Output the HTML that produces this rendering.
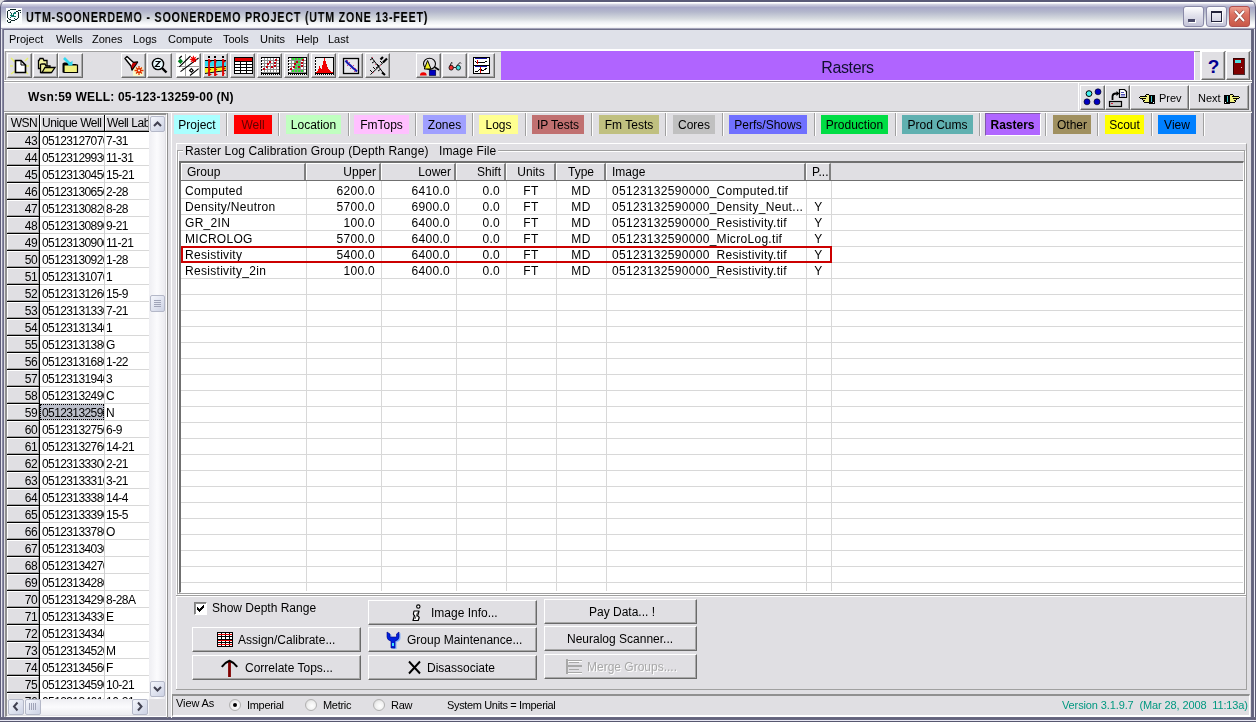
<!DOCTYPE html><html><head><meta charset="utf-8"><style>
*{margin:0;padding:0;box-sizing:border-box}
html,body{width:1256px;height:722px;overflow:hidden}
body{position:relative;background:#E0DFE3;font-family:"Liberation Sans",sans-serif;font-size:12px;color:#000}
.t{position:absolute;white-space:nowrap;line-height:14px;will-change:transform}
.btn{position:absolute;background:#E0DFE3;border-top:1px solid #fff;border-left:1px solid #fff;border-right:1px solid #6a6a6a;border-bottom:1px solid #6a6a6a;box-shadow:inset -1px -1px 0 #a8a8a8}
.rh{position:absolute;background:#E0DFE3;border-top:1px solid #fff;border-left:1px solid #fff;border-right:1px solid #a0a0a0;border-bottom:1px solid #a0a0a0}
</style></head><body>
<div style="position:absolute;left:0px;top:0px;width:1256px;height:30px;background:linear-gradient(#5a5a78 0px,#5a5a78 1.5px,#ffffff 2px,#ffffff 3px,#d0d0e0 4.5px,#a8a8c8 7.5px,#b4b8cc 12px,#d8dce0 19px,#eef0f4 22px,#ffffff 26px,#f0f0f4 27.5px,#b8b8cc 28.3px,#6e6e88 29px,#6e6e88 30px);border-radius:7px 7px 0 0;border-left:1px solid #5a5a78;border-right:1px solid #5a5a78"></div>
<svg style="position:absolute;left:5px;top:7px" width="17" height="17" viewBox="0 0 17 17" shape-rendering="crispEdges"><rect x="1" y="1" width="16" height="16" fill="#fafdfd"/><g fill="#102828"><rect x="5" y="2" width="1" height="1"/><rect x="6" y="2" width="1" height="1"/><rect x="7" y="2" width="1" height="1"/><rect x="8" y="2" width="1" height="1"/><rect x="9" y="2" width="1" height="1"/><rect x="10" y="2" width="1" height="1"/><rect x="3" y="3" width="1" height="1"/><rect x="4" y="3" width="1" height="1"/><rect x="13" y="3" width="1" height="1"/><rect x="14" y="3" width="1" height="1"/><rect x="15" y="3" width="1" height="1"/><rect x="2" y="4" width="1" height="1"/><rect x="11" y="4" width="1" height="1"/><rect x="12" y="4" width="1" height="1"/><rect x="2" y="5" width="1" height="1"/><rect x="13" y="5" width="1" height="1"/><rect x="15" y="5" width="1" height="1"/><rect x="2" y="6" width="1" height="1"/><rect x="13" y="6" width="1" height="1"/><rect x="2" y="7" width="1" height="1"/><rect x="13" y="7" width="1" height="1"/><rect x="2" y="8" width="1" height="1"/><rect x="13" y="8" width="1" height="1"/><rect x="2" y="9" width="1" height="1"/><rect x="13" y="9" width="1" height="1"/><rect x="2" y="10" width="1" height="1"/><rect x="13" y="10" width="1" height="1"/><rect x="3" y="11" width="1" height="1"/><rect x="12" y="11" width="1" height="1"/><rect x="4" y="12" width="1" height="1"/><rect x="11" y="12" width="1" height="1"/><rect x="10" y="12" width="1" height="1"/><rect x="2" y="13" width="1" height="1"/><rect x="6" y="13" width="1" height="1"/><rect x="7" y="13" width="1" height="1"/><rect x="8" y="13" width="1" height="1"/><rect x="9" y="13" width="1" height="1"/><rect x="5" y="12" width="1" height="1"/><rect x="2" y="14" width="1" height="1"/><rect x="3" y="15" width="1" height="1"/><rect x="4" y="15" width="1" height="1"/><rect x="5" y="15" width="1" height="1"/><rect x="5" y="14" width="1" height="1"/></g><g fill="#108070"><rect x="9" y="5" width="1" height="1"/><rect x="10" y="5" width="1" height="1"/><rect x="8" y="6" width="1" height="1"/><rect x="9" y="6" width="1" height="1"/><rect x="10" y="6" width="1" height="1"/><rect x="6" y="7" width="1" height="1"/><rect x="8" y="7" width="1" height="1"/><rect x="5" y="8" width="1" height="1"/><rect x="6" y="8" width="1" height="1"/><rect x="7" y="8" width="1" height="1"/><rect x="6" y="9" width="1" height="1"/><rect x="7" y="9" width="1" height="1"/><rect x="8" y="9" width="1" height="1"/><rect x="9" y="9" width="1" height="1"/><rect x="10" y="9" width="1" height="1"/></g><g fill="#204040"><rect x="5" y="5" width="1" height="1"/><rect x="6" y="6" width="1" height="1"/><rect x="8" y="8" width="1" height="1"/><rect x="5" y="10" width="1" height="1"/><rect x="9" y="11" width="1" height="1"/></g></svg>
<div style="position:absolute;left:1183px;top:6px;width:21px;height:21px;border:1px solid #8a8aa8;border-radius:3px;background:linear-gradient(#ffffff,#e4e4ee 40%,#c4c4d8)"></div><div style="position:absolute;left:1188px;top:19px;width:7px;height:3px;background:#4a4a68;box-shadow:1px 1px 0 #fff"></div><div style="position:absolute;left:1206px;top:6px;width:21px;height:21px;border:1px solid #8a8aa8;border-radius:3px;background:linear-gradient(#ffffff,#e4e4ee 40%,#c4c4d8)"></div><div style="position:absolute;left:1211px;top:11px;width:11px;height:11px;border:1px solid #202038;border-top-width:2px;box-shadow:1px 1px 0 #fff"></div><div style="position:absolute;left:1229px;top:6px;width:21px;height:21px;border:1px solid #b05050;border-radius:3px;background:linear-gradient(#eca090,#dc7060 40%,#c85848)"></div><svg style="position:absolute;left:1229px;top:6px" width="21" height="21" viewBox="0 0 21 21"><path d="M6 5 L15 15 M15 5 L6 15" stroke="#603030" stroke-width="3.4" opacity="0.55"/><path d="M6 5 L15 15 M15 5 L6 15" stroke="#fff" stroke-width="2"/></svg>
<div style="position:absolute;left:0px;top:29px;width:4px;height:693px;background:linear-gradient(90deg,#5e5c78 0,#5e5c78 1px,#e4e4ee 1px,#e4e4ee 2px,#8a8aa4 2px,#8a8aa4 3px,#6e6e88 3px,#6e6e88 4px)"></div>
<div style="position:absolute;left:1251px;top:29px;width:5px;height:693px;background:linear-gradient(90deg,#6c6c84 0,#5e5e78 2px,#74748c 3px,#e8e8f4 3px,#e8e8f4 4px,#585870 4px)"></div>
<div style="position:absolute;left:0px;top:717px;width:1256px;height:5px;background:linear-gradient(#6c6c84 0,#5e5e78 2px,#74748c 3px,#e8e8f4 3px,#e8e8f4 4px,#585870 4px)"></div>
<div class="t" style="left:26px;top:9px;font-weight:bold;font-size:14px;letter-spacing:1.0px;line-height:17px;color:#000;transform:scaleX(0.769);transform-origin:0 0">UTM-SOONERDEMO - SOONERDEMO PROJECT (UTM ZONE 13-FEET)</div>
<div style="position:absolute;left:4px;top:30px;width:1247px;height:19px;background:#DFE1E9"></div>
<div class="t" style="left:9px;top:32px;font-size:11px;line-height:14px">Project</div>
<div class="t" style="left:56px;top:32px;font-size:11px;line-height:14px">Wells</div>
<div class="t" style="left:92px;top:32px;font-size:11px;line-height:14px">Zones</div>
<div class="t" style="left:133px;top:32px;font-size:11px;line-height:14px">Logs</div>
<div class="t" style="left:168px;top:32px;font-size:11px;line-height:14px">Compute</div>
<div class="t" style="left:223px;top:32px;font-size:11px;line-height:14px">Tools</div>
<div class="t" style="left:260px;top:32px;font-size:11px;line-height:14px">Units</div>
<div class="t" style="left:296px;top:32px;font-size:11px;line-height:14px">Help</div>
<div class="t" style="left:328px;top:32px;font-size:11px;line-height:14px">Last</div>
<div style="position:absolute;left:4px;top:49px;width:1247px;height:2px;background:#fff"></div>
<div style="position:absolute;left:5px;top:51px;width:1247px;height:1px;background:#a0a0a0"></div>
<div style="position:absolute;left:5px;top:51px;width:1px;height:29px;background:#a0a0a0"></div>
<div style="position:absolute;left:4px;top:80px;width:1248px;height:1px;background:#fff"></div>
<div style="position:absolute;left:4px;top:81px;width:1248px;height:1px;background:#a0a0a0"></div>
<div style="position:absolute;left:4px;top:82px;width:1248px;height:1px;background:#fff"></div>
<div class="btn" style="left:7px;top:53px;width:25px;height:25px;"></div>
<div class="btn" style="left:33px;top:53px;width:25px;height:25px;"></div>
<div class="btn" style="left:58px;top:53px;width:25px;height:25px;"></div>
<div class="btn" style="left:121px;top:53px;width:25px;height:25px;"></div>
<div class="btn" style="left:147px;top:53px;width:25px;height:25px;"></div>
<div class="btn" style="left:176px;top:53px;width:25px;height:25px;"></div>
<div class="btn" style="left:203px;top:53px;width:25px;height:25px;"></div>
<div class="btn" style="left:230px;top:53px;width:25px;height:25px;"></div>
<div class="btn" style="left:257px;top:53px;width:25px;height:25px;"></div>
<div class="btn" style="left:284px;top:53px;width:25px;height:25px;"></div>
<div class="btn" style="left:311px;top:53px;width:25px;height:25px;"></div>
<div class="btn" style="left:338px;top:53px;width:25px;height:25px;"></div>
<div class="btn" style="left:365px;top:53px;width:25px;height:25px;"></div>
<div class="btn" style="left:416px;top:53px;width:25px;height:25px;"></div>
<div class="btn" style="left:442px;top:53px;width:25px;height:25px;"></div>
<div class="btn" style="left:468px;top:53px;width:27px;height:25px;"></div>
<svg style="position:absolute;left:7px;top:53px" width="25" height="25" viewBox="0 0 25 25"><g stroke="#e8f070" stroke-width="1.5"><path d="M4 5 L8 9 M21 5 L18 8 M4 21 L8 18 M21 21 L18 18 M3 13 H6 M19 13 H22"/></g><path d="M8.5 7.5 H14 L18.5 12 V19.5 H8.5 Z" fill="#fff" stroke="#000" stroke-width="1.6"/><path d="M14 7.5 V12 H18.5" fill="none" stroke="#000" stroke-width="1"/></svg><svg style="position:absolute;left:33px;top:53px" width="25" height="25" viewBox="0 0 25 25"><path d="M5.5 7.5 V15.5 H14 V7.5 H11 L10 5.5 H7 L6 7.5 Z" fill="#f0f0a0" stroke="#000" stroke-width="1.3"/><path d="M7.5 11.5 V19.5 H17 V13 H13 L12 11 H9 Z" fill="#f0f0a0" stroke="#000" stroke-width="1.3"/><path d="M9 19.5 L12 14.5 H22 L18.5 19.5 Z" fill="#e8e880" stroke="#000" stroke-width="1.3"/></svg><svg style="position:absolute;left:58px;top:53px" width="25" height="25" viewBox="0 0 25 25"><path d="M4.5 10.5 V19.5 H18.5 V11 H14 L13 9.5 H6 Z" fill="#000"/><path d="M6 12 H19.5 V19.5 H6 Z" fill="#f0f080" stroke="#000" stroke-width="1.2"/><path d="M6 5 L12 11" stroke="#30d8f0" stroke-width="2.6"/><path d="M9.5 12.5 H14.5 V7.5 Z" fill="#30d8f0"/></svg><svg style="position:absolute;left:121px;top:53px" width="25" height="25" viewBox="0 0 25 25"><path d="M12 14 L22 14 L22 23 L12 23 Z" fill="#fafac8"/><path d="M4 5.5 L6 3.5 L12.5 9.5 L16.5 9 L11 17 L10 13 Z" fill="#fff" stroke="#000" stroke-width="1.4" stroke-linejoin="round"/><path d="M11.5 10 L16 9.5 L11 16 L10.5 12.5 Z" fill="#c00000"/><g stroke="#e03000" stroke-width="1.3"><path d="M18 13 V22 M13.5 17.5 H22.5 M15 14.5 L21 20.5 M21 14.5 L15 20.5"/></g><circle cx="18" cy="17.5" r="2.4" fill="#e03000"/><circle cx="18" cy="17.5" r="1" fill="#fff"/></svg><svg style="position:absolute;left:147px;top:53px" width="25" height="25" viewBox="0 0 25 25"><circle cx="11" cy="11" r="5.6" fill="#e8f8fc" stroke="#000" stroke-width="1.4"/><path d="M15 15 L19.5 19.5" stroke="#000" stroke-width="2.4"/><path d="M8.5 8.5 H13 L8.5 13.5 H13" fill="none" stroke="#000" stroke-width="1.2"/></svg><svg style="position:absolute;left:176px;top:53px" width="25" height="25" viewBox="0 0 25 25"><rect x="1" y="1" width="22" height="22" fill="#fff"/><g fill="#a0a0a0"><rect x="9" y="1" width="1" height="22"/><rect x="1" y="13" width="22" height="1"/><rect x="6" y="15" width="2" height="1"/></g><g stroke="#000" stroke-width="1.1" fill="none"><path d="M3 5.5 L5.8 3 M3.3 13.8 L14.5 3 M4.5 18.6 L22.6 5 M14 22.5 L22.6 15.6"/></g><path d="M4.4 5.6 L7 8.3 L4.4 11 L1.8 8.3 Z" fill="#008020"/><circle cx="17.4" cy="6.4" r="2.2" fill="#f00000"/><g stroke="#f00000" stroke-width="1"><path d="M17.4 2.8 V10 M13.8 6.4 H21 M14.8 3.8 L20 9 M20 3.8 L14.8 9"/></g><path d="M15.4 14.8 L18 17.4 L15.4 20 L12.8 17.4 Z" fill="#000"/><rect x="14.7" y="16.7" width="1.4" height="1.4" fill="#fff"/></svg><svg style="position:absolute;left:203px;top:53px" width="25" height="25" viewBox="0 0 25 25"><rect x="2" y="8" width="21" height="5.5" fill="#30d8f0"/><path d="M2 14.5 H14 L23 13.5 V17.5 L12 18.5 L2 20 Z" fill="#f0f020"/><g fill="#000"><rect x="5" y="3" width="2" height="2"/><rect x="11" y="3" width="2" height="2"/><rect x="19" y="3" width="2" height="2"/></g><g stroke="#000" stroke-width="1" fill="none"><path d="M2 7.5 H23 M2 14.5 H12 L23 13.5 M2 20.5 L12 19 L23 17.5"/></g><g stroke="#e00000" stroke-width="1.8"><path d="M6 6 V23 M12 6 V23 M20 6 V23"/></g><g fill="#e00000"><path d="M6 7 L9 8.5 L6 10 Z M12 7 L14 9 L12 10 Z M20 7 L23 8.5 L20 10 Z M6 15 L8.5 16.5 L6 18 Z M12 15 L14.5 16.5 L12 18 Z M20 14 L23 15.5 L20 17 Z M6 20 L9 21.5 L6 23 Z M12 20 L15 21.5 L12 23 Z M20 19 L22 20.5 L20 22 Z"/></g></svg><svg style="position:absolute;left:230px;top:53px" width="25" height="25" viewBox="0 0 25 25" shape-rendering="crispEdges"><rect x="4" y="4" width="19" height="17" fill="#000"/><rect x="5" y="5" width="17" height="3" fill="#e00000"/><g fill="#fff"><rect x="5" y="9" width="5" height="2"/><rect x="11" y="9" width="5" height="2"/><rect x="17" y="9" width="5" height="2"/><rect x="5" y="12" width="5" height="2"/><rect x="11" y="12" width="5" height="2"/><rect x="17" y="12" width="5" height="2"/><rect x="5" y="15" width="5" height="2"/><rect x="11" y="15" width="5" height="2"/><rect x="17" y="15" width="5" height="2"/><rect x="5" y="18" width="5" height="2"/><rect x="11" y="18" width="5" height="2"/><rect x="17" y="18" width="5" height="2"/></g></svg><svg style="position:absolute;left:257px;top:53px" width="25" height="25" viewBox="0 0 25 25" shape-rendering="crispEdges"><rect x="4" y="4" width="19" height="18" fill="#000"/><rect x="5" y="5" width="17" height="15" fill="#fff"/><g fill="#fff"><rect x="4" y="6" width="1" height="1"/><rect x="4" y="9" width="1" height="1"/><rect x="4" y="12" width="1" height="1"/><rect x="4" y="15" width="1" height="1"/><rect x="4" y="18" width="1" height="1"/><rect x="5" y="21" width="1" height="1"/><rect x="7" y="21" width="1" height="1"/><rect x="9" y="21" width="1" height="1"/><rect x="11" y="21" width="1" height="1"/><rect x="13" y="21" width="1" height="1"/><rect x="15" y="21" width="1" height="1"/><rect x="17" y="21" width="1" height="1"/><rect x="19" y="21" width="1" height="1"/><rect x="21" y="21" width="1" height="1"/></g><g fill="#909090"><rect x="7" y="5" width="1" height="15"/><rect x="10" y="5" width="1" height="15"/><rect x="13" y="5" width="1" height="15"/><rect x="16" y="5" width="1" height="15"/><rect x="19" y="5" width="1" height="15"/><rect x="5" y="7" width="17" height="1"/><rect x="5" y="10" width="17" height="1"/><rect x="5" y="13" width="17" height="1"/><rect x="5" y="16" width="17" height="1"/><rect x="5" y="19" width="17" height="1"/></g><g fill="#c00010"><rect x="6" y="15" width="2" height="2"/><rect x="9" y="13" width="2" height="2"/><rect x="10" y="10" width="2" height="2"/><rect x="14" y="13" width="2" height="2"/><rect x="12" y="8" width="2" height="2"/><rect x="17" y="9" width="2" height="2"/><rect x="17" y="12" width="2" height="2"/><rect x="18" y="6" width="2" height="2"/></g></svg><svg style="position:absolute;left:284px;top:53px" width="25" height="25" viewBox="0 0 25 25" shape-rendering="crispEdges"><rect x="4" y="4" width="19" height="18" fill="#000"/><rect x="5" y="5" width="17" height="15" fill="#fff"/><g fill="#fff"><rect x="4" y="6" width="1" height="1"/><rect x="4" y="9" width="1" height="1"/><rect x="4" y="12" width="1" height="1"/><rect x="4" y="15" width="1" height="1"/><rect x="4" y="18" width="1" height="1"/><rect x="5" y="21" width="1" height="1"/><rect x="7" y="21" width="1" height="1"/><rect x="9" y="21" width="1" height="1"/><rect x="11" y="21" width="1" height="1"/><rect x="13" y="21" width="1" height="1"/><rect x="15" y="21" width="1" height="1"/><rect x="17" y="21" width="1" height="1"/><rect x="19" y="21" width="1" height="1"/><rect x="21" y="21" width="1" height="1"/></g><g fill="#30e030"><rect x="8" y="5" width="12" height="3"/><rect x="11" y="8" width="6" height="9"/><rect x="8" y="17" width="12" height="3"/></g><g fill="#909090"><rect x="7" y="5" width="1" height="15"/><rect x="10" y="5" width="1" height="15"/><rect x="13" y="5" width="1" height="15"/><rect x="16" y="5" width="1" height="15"/><rect x="19" y="5" width="1" height="15"/><rect x="5" y="7" width="17" height="1"/><rect x="5" y="10" width="17" height="1"/><rect x="5" y="13" width="17" height="1"/><rect x="5" y="16" width="17" height="1"/><rect x="5" y="19" width="17" height="1"/></g><g fill="#c00010"><rect x="6" y="15" width="2" height="2"/><rect x="9" y="13" width="2" height="2"/><rect x="10" y="10" width="2" height="2"/><rect x="14" y="13" width="2" height="2"/><rect x="12" y="8" width="2" height="2"/><rect x="17" y="9" width="2" height="2"/><rect x="17" y="12" width="2" height="2"/><rect x="18" y="6" width="2" height="2"/></g></svg><svg style="position:absolute;left:311px;top:53px" width="25" height="25" viewBox="0 0 25 25" shape-rendering="crispEdges"><rect x="4" y="4" width="19" height="18" fill="#000"/><rect x="5" y="5" width="17" height="15" fill="#f0f0f0"/><g fill="#fff"><rect x="4" y="6" width="1" height="1"/><rect x="4" y="9" width="1" height="1"/><rect x="4" y="12" width="1" height="1"/><rect x="4" y="15" width="1" height="1"/><rect x="4" y="18" width="1" height="1"/><rect x="5" y="21" width="1" height="1"/><rect x="7" y="21" width="1" height="1"/><rect x="9" y="21" width="1" height="1"/><rect x="11" y="21" width="1" height="1"/><rect x="13" y="21" width="1" height="1"/><rect x="15" y="21" width="1" height="1"/><rect x="17" y="21" width="1" height="1"/><rect x="19" y="21" width="1" height="1"/><rect x="21" y="21" width="1" height="1"/></g><g fill="#f00000"><rect x="5" y="19" width="1" height="1"/><rect x="6" y="18" width="1" height="2"/><rect x="7" y="16" width="1" height="4"/><rect x="8" y="13" width="1" height="7"/><rect x="9" y="15" width="1" height="5"/><rect x="10" y="16" width="1" height="4"/><rect x="11" y="12" width="1" height="8"/><rect x="12" y="8" width="1" height="12"/><rect x="13" y="5" width="1" height="15"/><rect x="14" y="8" width="1" height="12"/><rect x="15" y="11" width="1" height="9"/><rect x="16" y="14" width="1" height="6"/><rect x="17" y="16" width="1" height="4"/><rect x="18" y="17" width="1" height="3"/><rect x="19" y="18" width="1" height="2"/><rect x="20" y="19" width="1" height="1"/><rect x="21" y="19" width="1" height="1"/></g></svg><svg style="position:absolute;left:338px;top:53px" width="25" height="25" viewBox="0 0 25 25"><rect x="5.5" y="5.5" width="15" height="15" fill="#e8e8ec" stroke="#000" stroke-width="1.3"/><path d="M7.5 7.5 L10 10.5 L12.5 12.5 L15 15 L17.5 17 L19 18.5" fill="none" stroke="#1818b0" stroke-width="2.2"/><g fill="#e04080"><rect x="9" y="7" width="1" height="1"/><rect x="11" y="9" width="1" height="1"/><rect x="9" y="12" width="1" height="1"/><rect x="15" y="12" width="1" height="1"/><rect x="12" y="15" width="1" height="1"/><rect x="17" y="15" width="1" height="1"/><rect x="16" y="18" width="1" height="1"/></g></svg><svg style="position:absolute;left:365px;top:53px" width="25" height="25" viewBox="0 0 25 25"><g stroke="#000" stroke-width="1" fill="none"><path d="M6.5 4.5 L19.5 21.5 M5.5 21.5 L21.5 6.5"/><path d="M5 7 L8 5 M7 10 L10 8 M11 15 L14 13 M13 18 L16 16 M5 17 L7 19 M8 14 L10 16 M12 11 L14 13 M15 8 L17 10"/></g><g stroke="#000" stroke-width="2.2"><path d="M15.5 6.5 L18 4 M18 9.5 L22 5.5 M17 19.5 L20 22"/></g><g fill="#f06080"><rect x="7" y="4" width="1" height="1"/><rect x="10" y="11" width="1" height="1"/><rect x="15" y="12" width="1" height="1"/><rect x="8" y="19" width="1" height="1"/></g></svg><svg style="position:absolute;left:416px;top:53px" width="25" height="25" viewBox="0 0 25 25"><ellipse cx="13.5" cy="10.8" rx="6" ry="5.6" fill="none" stroke="#000" stroke-width="1.1"/><path d="M18.5 14 L23 17" stroke="#000" stroke-width="1.6"/><path d="M11.6 7.5 L15 16 H8.3 Z" fill="#f0f020" stroke="#000" stroke-width="1"/><path d="M3.9 22.6 A3.4 3.4 0 0 1 10.7 22.6 Z" fill="#f00000"/><rect x="13.2" y="17" width="6.6" height="5.6" fill="#0000c0" stroke="#000" stroke-width="0.5"/></svg><svg style="position:absolute;left:442px;top:53px" width="25" height="25" viewBox="0 0 25 25"><path d="M8 13 L9.5 9.5 L10.5 10 M15 12.5 L18 9.5 L19 10.5" fill="none" stroke="#000" stroke-width="0.9"/><path d="M11.3 14.5 H14.2" stroke="#000" stroke-width="0.8"/><ellipse cx="9.2" cy="14.7" rx="2.2" ry="2.4" fill="#f03030" stroke="#000" stroke-width="0.8"/><ellipse cx="16.3" cy="14.7" rx="2.2" ry="2.4" fill="#40e0e0" stroke="#000" stroke-width="0.8"/></svg><svg style="position:absolute;left:468px;top:53px" width="27" height="25" viewBox="0 0 27 25" shape-rendering="crispEdges"><rect x="5" y="4" width="17" height="17" fill="#000"/><rect x="6" y="5" width="15" height="7" fill="#fff"/><rect x="6" y="13" width="15" height="7" fill="#fff"/><rect x="7" y="5" width="12" height="1" fill="#1010a0"/><rect x="7" y="13" width="12" height="1" fill="#1010a0"/><g stroke="#000" stroke-width="1" fill="none"><path d="M7 8 L9 10 L12 9 L15 10 L19 8 M7 18 L10 18 L12 16 L15 18 L19 15"/></g><g stroke="#e00000" stroke-width="1"><path d="M9 7 V11 M12 14 V20"/></g></svg>
<div style="position:absolute;left:501px;top:51px;width:693px;height:29px;background:#B064FF"></div>
<div class="t" style="left:501px;top:59px;width:693px;text-align:center;font-size:16px;line-height:18px;color:#101030;letter-spacing:-0.4px">Rasters</div>
<div style="position:absolute;left:1194px;top:52px;width:1px;height:28px;background:#fff"></div>
<div style="position:absolute;left:1195px;top:51px;width:5px;height:29px;background:#E0DFE3;border-top:1px solid #909090"></div>
<div style="position:absolute;left:1200px;top:51px;width:1px;height:29px;background:#fff"></div>
<div class="btn" style="left:1201px;top:51px;width:24px;height:29px;"></div>
<div class="btn" style="left:1226px;top:51px;width:24px;height:29px;"></div>
<div style="position:absolute;left:1201px;top:57px;width:25px;text-align:center;font:bold 19px/20px 'Liberation Sans',sans-serif;color:#000090">?</div><svg style="position:absolute;left:1226px;top:51px" width="24" height="29" viewBox="0 0 24 29" shape-rendering="crispEdges"><rect x="7" y="7" width="11" height="16" fill="#800000" stroke="#200000" stroke-width="0.8"/><rect x="9" y="9" width="6" height="3" fill="#50e0e0"/><rect x="15" y="16" width="1" height="1" fill="#f0c0c0"/></svg>
<div class="t" style="left:28px;top:90px;font-weight:bold;font-size:12px;letter-spacing:0.2px">Wsn:59 WELL: 05-123-13259-00 (N)</div>
<div style="position:absolute;left:4px;top:111px;width:1248px;height:1px;background:#a0a0a0"></div>
<div style="position:absolute;left:4px;top:112px;width:1248px;height:1px;background:#fff"></div>
<div style="position:absolute;left:1078px;top:83px;width:1px;height:28px;background:#fff"></div>
<div class="btn" style="left:1080px;top:85px;width:25px;height:25px;"></div>
<div class="btn" style="left:1105px;top:85px;width:25px;height:25px;"></div>
<div class="btn" style="left:1130px;top:85px;width:59px;height:25px;"></div>
<div class="btn" style="left:1189px;top:85px;width:60px;height:25px;"></div>
<div class="t" style="left:1159px;top:91px;font-size:11px">Prev</div>
<div class="t" style="left:1198px;top:91px;font-size:11px">Next</div>
<svg style="position:absolute;left:1080px;top:85px" width="24" height="24" viewBox="0 0 24 24"><circle cx="9" cy="8.6" r="2.9" fill="#40f0f0" stroke="#000" stroke-width="1"/><circle cx="18" cy="6.8" r="3" fill="#0000c0" stroke="#000" stroke-width="0.6"/><circle cx="7" cy="16.8" r="3" fill="#0000c0" stroke="#000" stroke-width="0.6"/><circle cx="17" cy="16.8" r="3" fill="#0000c0" stroke="#000" stroke-width="0.6"/></svg><svg style="position:absolute;left:1105px;top:85px" width="24" height="24" viewBox="0 0 24 24"><path d="M14.5 4.5 H19.5 L21.5 6.5 V12.5 H14.5 Z" fill="#fff" stroke="#000" stroke-width="1.2"/><g stroke="#2020a0" stroke-width="0.8"><path d="M16 7.5 H19 M16 9.5 H20 M16 11 H20"/></g><path d="M7.5 15 V11.5 Q7.5 8.5 11 8.5 H12" fill="none" stroke="#000" stroke-width="1.8"/><path d="M11.5 6 L14.5 8.5 L11.5 11 Z" fill="#000"/><rect x="4.5" y="16.5" width="12" height="5" fill="#c8c8c8" stroke="#000" stroke-width="1.2"/><rect x="6" y="18" width="2" height="1" fill="#d02040"/></svg><svg style="position:absolute;left:1139px;top:94px" width="16" height="10" viewBox="0 0 16 10" shape-rendering="crispEdges"><g fill="#f0f080"><rect x="1" y="3" width="6" height="1"/><rect x="7" y="1" width="3" height="7"/><rect x="4" y="5" width="6" height="3"/></g><g fill="#000"><rect x="7" y="0" width="3" height="1"/><rect x="6" y="1" width="1" height="1"/><rect x="1" y="2" width="7" height="1"/><rect x="0" y="3" width="1" height="1"/><rect x="1" y="4" width="6" height="1"/><rect x="3" y="5" width="1" height="1"/><rect x="4" y="6" width="2" height="1"/><rect x="4" y="7" width="1" height="1"/><rect x="5" y="8" width="5" height="1"/><rect x="10" y="1" width="6" height="9"/></g><rect x="12" y="2" width="1" height="6" fill="#40c8d0"/><rect x="14" y="8" width="1" height="1" fill="#fff"/></svg><svg style="position:absolute;left:1224px;top:94px" width="16" height="10" viewBox="0 0 16 10" shape-rendering="crispEdges"><g transform="translate(16,0) scale(-1,1)"><g fill="#f0f080"><rect x="1" y="3" width="6" height="1"/><rect x="7" y="1" width="3" height="7"/><rect x="4" y="5" width="6" height="3"/></g><g fill="#000"><rect x="7" y="0" width="3" height="1"/><rect x="6" y="1" width="1" height="1"/><rect x="1" y="2" width="7" height="1"/><rect x="0" y="3" width="1" height="1"/><rect x="1" y="4" width="6" height="1"/><rect x="3" y="5" width="1" height="1"/><rect x="4" y="6" width="2" height="1"/><rect x="4" y="7" width="1" height="1"/><rect x="5" y="8" width="5" height="1"/><rect x="10" y="1" width="6" height="9"/></g><rect x="12" y="2" width="1" height="6" fill="#40c8d0"/><rect x="14" y="8" width="1" height="1" fill="#fff"/></g></svg>
<div style="position:absolute;left:5px;top:113px;width:162px;height:604px;border-top:2px solid #909090;border-left:2px solid #909090;border-right:1px solid #fff;border-bottom:1px solid #fff"></div>
<div class="rh" style="left:7px;top:115px;width:33px;height:16px"></div>
<div class="t" style="left:9px;top:116px;width:30px;overflow:hidden;text-align:center;font-size:12px;letter-spacing:-0.45px">WSN</div>
<div class="rh" style="left:40px;top:115px;width:65px;height:16px"></div>
<div class="t" style="left:42px;top:116px;width:62px;overflow:hidden;text-align:left;font-size:12px;letter-spacing:-0.45px">Unique Well</div>
<div class="rh" style="left:105px;top:115px;width:44px;height:16px"></div>
<div class="t" style="left:107px;top:116px;width:41px;overflow:hidden;text-align:left;font-size:12px;letter-spacing:-0.45px">Well Lab</div>
<div style="position:absolute;left:7px;top:131px;width:142px;height:1px;background:#000"></div>
<div style="position:absolute;left:39px;top:115px;width:1px;height:16px;background:#000"></div>
<div style="position:absolute;left:104px;top:115px;width:1px;height:16px;background:#000"></div>
<div style="position:absolute;left:40px;top:132px;width:109px;height:567px;background:#fff"></div>
<div style="position:absolute;left:7px;top:132px;width:142px;height:567px;overflow:hidden">
<div class="rh" style="left:0px;top:0px;width:32px;height:16px"></div>
<div style="position:absolute;left:0;top:16px;width:33px;height:1px;background:#000"></div>
<div style="position:absolute;left:33px;top:16px;width:109px;height:1px;background:#d8d8d8"></div>
<div class="t" style="left:0px;top:2px;width:30px;text-align:right;font-size:12px;letter-spacing:-0.6px">43</div>
<div class="t" style="left:35px;top:2px;width:62px;overflow:hidden;font-size:12px;letter-spacing:-0.6px">05123127070000</div>
<div class="t" style="left:99px;top:2px;width:42px;overflow:hidden;font-size:12px;letter-spacing:-0.5px">7-31</div>
<div class="rh" style="left:0px;top:17px;width:32px;height:16px"></div>
<div style="position:absolute;left:0;top:33px;width:33px;height:1px;background:#000"></div>
<div style="position:absolute;left:33px;top:33px;width:109px;height:1px;background:#d8d8d8"></div>
<div class="t" style="left:0px;top:19px;width:30px;text-align:right;font-size:12px;letter-spacing:-0.6px">44</div>
<div class="t" style="left:35px;top:19px;width:62px;overflow:hidden;font-size:12px;letter-spacing:-0.6px">05123129930000</div>
<div class="t" style="left:99px;top:19px;width:42px;overflow:hidden;font-size:12px;letter-spacing:-0.5px">11-31</div>
<div class="rh" style="left:0px;top:34px;width:32px;height:16px"></div>
<div style="position:absolute;left:0;top:50px;width:33px;height:1px;background:#000"></div>
<div style="position:absolute;left:33px;top:50px;width:109px;height:1px;background:#d8d8d8"></div>
<div class="t" style="left:0px;top:36px;width:30px;text-align:right;font-size:12px;letter-spacing:-0.6px">45</div>
<div class="t" style="left:35px;top:36px;width:62px;overflow:hidden;font-size:12px;letter-spacing:-0.6px">05123130450000</div>
<div class="t" style="left:99px;top:36px;width:42px;overflow:hidden;font-size:12px;letter-spacing:-0.5px">15-21</div>
<div class="rh" style="left:0px;top:51px;width:32px;height:16px"></div>
<div style="position:absolute;left:0;top:67px;width:33px;height:1px;background:#000"></div>
<div style="position:absolute;left:33px;top:67px;width:109px;height:1px;background:#d8d8d8"></div>
<div class="t" style="left:0px;top:53px;width:30px;text-align:right;font-size:12px;letter-spacing:-0.6px">46</div>
<div class="t" style="left:35px;top:53px;width:62px;overflow:hidden;font-size:12px;letter-spacing:-0.6px">05123130650000</div>
<div class="t" style="left:99px;top:53px;width:42px;overflow:hidden;font-size:12px;letter-spacing:-0.5px">2-28</div>
<div class="rh" style="left:0px;top:68px;width:32px;height:16px"></div>
<div style="position:absolute;left:0;top:84px;width:33px;height:1px;background:#000"></div>
<div style="position:absolute;left:33px;top:84px;width:109px;height:1px;background:#d8d8d8"></div>
<div class="t" style="left:0px;top:70px;width:30px;text-align:right;font-size:12px;letter-spacing:-0.6px">47</div>
<div class="t" style="left:35px;top:70px;width:62px;overflow:hidden;font-size:12px;letter-spacing:-0.6px">05123130820000</div>
<div class="t" style="left:99px;top:70px;width:42px;overflow:hidden;font-size:12px;letter-spacing:-0.5px">8-28</div>
<div class="rh" style="left:0px;top:85px;width:32px;height:16px"></div>
<div style="position:absolute;left:0;top:101px;width:33px;height:1px;background:#000"></div>
<div style="position:absolute;left:33px;top:101px;width:109px;height:1px;background:#d8d8d8"></div>
<div class="t" style="left:0px;top:87px;width:30px;text-align:right;font-size:12px;letter-spacing:-0.6px">48</div>
<div class="t" style="left:35px;top:87px;width:62px;overflow:hidden;font-size:12px;letter-spacing:-0.6px">05123130890000</div>
<div class="t" style="left:99px;top:87px;width:42px;overflow:hidden;font-size:12px;letter-spacing:-0.5px">9-21</div>
<div class="rh" style="left:0px;top:102px;width:32px;height:16px"></div>
<div style="position:absolute;left:0;top:118px;width:33px;height:1px;background:#000"></div>
<div style="position:absolute;left:33px;top:118px;width:109px;height:1px;background:#d8d8d8"></div>
<div class="t" style="left:0px;top:104px;width:30px;text-align:right;font-size:12px;letter-spacing:-0.6px">49</div>
<div class="t" style="left:35px;top:104px;width:62px;overflow:hidden;font-size:12px;letter-spacing:-0.6px">05123130900000</div>
<div class="t" style="left:99px;top:104px;width:42px;overflow:hidden;font-size:12px;letter-spacing:-0.5px">11-21</div>
<div class="rh" style="left:0px;top:119px;width:32px;height:16px"></div>
<div style="position:absolute;left:0;top:135px;width:33px;height:1px;background:#000"></div>
<div style="position:absolute;left:33px;top:135px;width:109px;height:1px;background:#d8d8d8"></div>
<div class="t" style="left:0px;top:121px;width:30px;text-align:right;font-size:12px;letter-spacing:-0.6px">50</div>
<div class="t" style="left:35px;top:121px;width:62px;overflow:hidden;font-size:12px;letter-spacing:-0.6px">05123130920000</div>
<div class="t" style="left:99px;top:121px;width:42px;overflow:hidden;font-size:12px;letter-spacing:-0.5px">1-28</div>
<div class="rh" style="left:0px;top:136px;width:32px;height:16px"></div>
<div style="position:absolute;left:0;top:152px;width:33px;height:1px;background:#000"></div>
<div style="position:absolute;left:33px;top:152px;width:109px;height:1px;background:#d8d8d8"></div>
<div class="t" style="left:0px;top:138px;width:30px;text-align:right;font-size:12px;letter-spacing:-0.6px">51</div>
<div class="t" style="left:35px;top:138px;width:62px;overflow:hidden;font-size:12px;letter-spacing:-0.6px">05123131070000</div>
<div class="t" style="left:99px;top:138px;width:42px;overflow:hidden;font-size:12px;letter-spacing:-0.5px">1</div>
<div class="rh" style="left:0px;top:153px;width:32px;height:16px"></div>
<div style="position:absolute;left:0;top:169px;width:33px;height:1px;background:#000"></div>
<div style="position:absolute;left:33px;top:169px;width:109px;height:1px;background:#d8d8d8"></div>
<div class="t" style="left:0px;top:155px;width:30px;text-align:right;font-size:12px;letter-spacing:-0.6px">52</div>
<div class="t" style="left:35px;top:155px;width:62px;overflow:hidden;font-size:12px;letter-spacing:-0.6px">05123131260000</div>
<div class="t" style="left:99px;top:155px;width:42px;overflow:hidden;font-size:12px;letter-spacing:-0.5px">15-9</div>
<div class="rh" style="left:0px;top:170px;width:32px;height:16px"></div>
<div style="position:absolute;left:0;top:186px;width:33px;height:1px;background:#000"></div>
<div style="position:absolute;left:33px;top:186px;width:109px;height:1px;background:#d8d8d8"></div>
<div class="t" style="left:0px;top:172px;width:30px;text-align:right;font-size:12px;letter-spacing:-0.6px">53</div>
<div class="t" style="left:35px;top:172px;width:62px;overflow:hidden;font-size:12px;letter-spacing:-0.6px">05123131330000</div>
<div class="t" style="left:99px;top:172px;width:42px;overflow:hidden;font-size:12px;letter-spacing:-0.5px">7-21</div>
<div class="rh" style="left:0px;top:187px;width:32px;height:16px"></div>
<div style="position:absolute;left:0;top:203px;width:33px;height:1px;background:#000"></div>
<div style="position:absolute;left:33px;top:203px;width:109px;height:1px;background:#d8d8d8"></div>
<div class="t" style="left:0px;top:189px;width:30px;text-align:right;font-size:12px;letter-spacing:-0.6px">54</div>
<div class="t" style="left:35px;top:189px;width:62px;overflow:hidden;font-size:12px;letter-spacing:-0.6px">05123131340000</div>
<div class="t" style="left:99px;top:189px;width:42px;overflow:hidden;font-size:12px;letter-spacing:-0.5px">1</div>
<div class="rh" style="left:0px;top:204px;width:32px;height:16px"></div>
<div style="position:absolute;left:0;top:220px;width:33px;height:1px;background:#000"></div>
<div style="position:absolute;left:33px;top:220px;width:109px;height:1px;background:#d8d8d8"></div>
<div class="t" style="left:0px;top:206px;width:30px;text-align:right;font-size:12px;letter-spacing:-0.6px">55</div>
<div class="t" style="left:35px;top:206px;width:62px;overflow:hidden;font-size:12px;letter-spacing:-0.6px">05123131380000</div>
<div class="t" style="left:99px;top:206px;width:42px;overflow:hidden;font-size:12px;letter-spacing:-0.5px">G</div>
<div class="rh" style="left:0px;top:221px;width:32px;height:16px"></div>
<div style="position:absolute;left:0;top:237px;width:33px;height:1px;background:#000"></div>
<div style="position:absolute;left:33px;top:237px;width:109px;height:1px;background:#d8d8d8"></div>
<div class="t" style="left:0px;top:223px;width:30px;text-align:right;font-size:12px;letter-spacing:-0.6px">56</div>
<div class="t" style="left:35px;top:223px;width:62px;overflow:hidden;font-size:12px;letter-spacing:-0.6px">05123131680000</div>
<div class="t" style="left:99px;top:223px;width:42px;overflow:hidden;font-size:12px;letter-spacing:-0.5px">1-22</div>
<div class="rh" style="left:0px;top:238px;width:32px;height:16px"></div>
<div style="position:absolute;left:0;top:254px;width:33px;height:1px;background:#000"></div>
<div style="position:absolute;left:33px;top:254px;width:109px;height:1px;background:#d8d8d8"></div>
<div class="t" style="left:0px;top:240px;width:30px;text-align:right;font-size:12px;letter-spacing:-0.6px">57</div>
<div class="t" style="left:35px;top:240px;width:62px;overflow:hidden;font-size:12px;letter-spacing:-0.6px">05123131940000</div>
<div class="t" style="left:99px;top:240px;width:42px;overflow:hidden;font-size:12px;letter-spacing:-0.5px">3</div>
<div class="rh" style="left:0px;top:255px;width:32px;height:16px"></div>
<div style="position:absolute;left:0;top:271px;width:33px;height:1px;background:#000"></div>
<div style="position:absolute;left:33px;top:271px;width:109px;height:1px;background:#d8d8d8"></div>
<div class="t" style="left:0px;top:257px;width:30px;text-align:right;font-size:12px;letter-spacing:-0.6px">58</div>
<div class="t" style="left:35px;top:257px;width:62px;overflow:hidden;font-size:12px;letter-spacing:-0.6px">05123132490000</div>
<div class="t" style="left:99px;top:257px;width:42px;overflow:hidden;font-size:12px;letter-spacing:-0.5px">C</div>
<div class="rh" style="left:0px;top:272px;width:32px;height:16px"></div>
<div style="position:absolute;left:0;top:288px;width:33px;height:1px;background:#000"></div>
<div style="position:absolute;left:33px;top:288px;width:109px;height:1px;background:#d8d8d8"></div>
<div class="t" style="left:0px;top:274px;width:30px;text-align:right;font-size:12px;letter-spacing:-0.6px">59</div>
<div style="position:absolute;left:33px;top:272px;width:64px;height:16px;background:#BCBFCA;border:1px dotted #000"></div>
<div class="t" style="left:35px;top:274px;width:62px;overflow:hidden;font-size:12px;letter-spacing:-0.6px">05123132590000</div>
<div class="t" style="left:99px;top:274px;width:42px;overflow:hidden;font-size:12px;letter-spacing:-0.5px">N</div>
<div class="rh" style="left:0px;top:289px;width:32px;height:16px"></div>
<div style="position:absolute;left:0;top:305px;width:33px;height:1px;background:#000"></div>
<div style="position:absolute;left:33px;top:305px;width:109px;height:1px;background:#d8d8d8"></div>
<div class="t" style="left:0px;top:291px;width:30px;text-align:right;font-size:12px;letter-spacing:-0.6px">60</div>
<div class="t" style="left:35px;top:291px;width:62px;overflow:hidden;font-size:12px;letter-spacing:-0.6px">05123132750000</div>
<div class="t" style="left:99px;top:291px;width:42px;overflow:hidden;font-size:12px;letter-spacing:-0.5px">6-9</div>
<div class="rh" style="left:0px;top:306px;width:32px;height:16px"></div>
<div style="position:absolute;left:0;top:322px;width:33px;height:1px;background:#000"></div>
<div style="position:absolute;left:33px;top:322px;width:109px;height:1px;background:#d8d8d8"></div>
<div class="t" style="left:0px;top:308px;width:30px;text-align:right;font-size:12px;letter-spacing:-0.6px">61</div>
<div class="t" style="left:35px;top:308px;width:62px;overflow:hidden;font-size:12px;letter-spacing:-0.6px">05123132760000</div>
<div class="t" style="left:99px;top:308px;width:42px;overflow:hidden;font-size:12px;letter-spacing:-0.5px">14-21</div>
<div class="rh" style="left:0px;top:323px;width:32px;height:16px"></div>
<div style="position:absolute;left:0;top:339px;width:33px;height:1px;background:#000"></div>
<div style="position:absolute;left:33px;top:339px;width:109px;height:1px;background:#d8d8d8"></div>
<div class="t" style="left:0px;top:325px;width:30px;text-align:right;font-size:12px;letter-spacing:-0.6px">62</div>
<div class="t" style="left:35px;top:325px;width:62px;overflow:hidden;font-size:12px;letter-spacing:-0.6px">05123133300000</div>
<div class="t" style="left:99px;top:325px;width:42px;overflow:hidden;font-size:12px;letter-spacing:-0.5px">2-21</div>
<div class="rh" style="left:0px;top:340px;width:32px;height:16px"></div>
<div style="position:absolute;left:0;top:356px;width:33px;height:1px;background:#000"></div>
<div style="position:absolute;left:33px;top:356px;width:109px;height:1px;background:#d8d8d8"></div>
<div class="t" style="left:0px;top:342px;width:30px;text-align:right;font-size:12px;letter-spacing:-0.6px">63</div>
<div class="t" style="left:35px;top:342px;width:62px;overflow:hidden;font-size:12px;letter-spacing:-0.6px">05123133310000</div>
<div class="t" style="left:99px;top:342px;width:42px;overflow:hidden;font-size:12px;letter-spacing:-0.5px">3-21</div>
<div class="rh" style="left:0px;top:357px;width:32px;height:16px"></div>
<div style="position:absolute;left:0;top:373px;width:33px;height:1px;background:#000"></div>
<div style="position:absolute;left:33px;top:373px;width:109px;height:1px;background:#d8d8d8"></div>
<div class="t" style="left:0px;top:359px;width:30px;text-align:right;font-size:12px;letter-spacing:-0.6px">64</div>
<div class="t" style="left:35px;top:359px;width:62px;overflow:hidden;font-size:12px;letter-spacing:-0.6px">05123133380000</div>
<div class="t" style="left:99px;top:359px;width:42px;overflow:hidden;font-size:12px;letter-spacing:-0.5px">14-4</div>
<div class="rh" style="left:0px;top:374px;width:32px;height:16px"></div>
<div style="position:absolute;left:0;top:390px;width:33px;height:1px;background:#000"></div>
<div style="position:absolute;left:33px;top:390px;width:109px;height:1px;background:#d8d8d8"></div>
<div class="t" style="left:0px;top:376px;width:30px;text-align:right;font-size:12px;letter-spacing:-0.6px">65</div>
<div class="t" style="left:35px;top:376px;width:62px;overflow:hidden;font-size:12px;letter-spacing:-0.6px">05123133390000</div>
<div class="t" style="left:99px;top:376px;width:42px;overflow:hidden;font-size:12px;letter-spacing:-0.5px">15-5</div>
<div class="rh" style="left:0px;top:391px;width:32px;height:16px"></div>
<div style="position:absolute;left:0;top:407px;width:33px;height:1px;background:#000"></div>
<div style="position:absolute;left:33px;top:407px;width:109px;height:1px;background:#d8d8d8"></div>
<div class="t" style="left:0px;top:393px;width:30px;text-align:right;font-size:12px;letter-spacing:-0.6px">66</div>
<div class="t" style="left:35px;top:393px;width:62px;overflow:hidden;font-size:12px;letter-spacing:-0.6px">05123133780000</div>
<div class="t" style="left:99px;top:393px;width:42px;overflow:hidden;font-size:12px;letter-spacing:-0.5px">O</div>
<div class="rh" style="left:0px;top:408px;width:32px;height:16px"></div>
<div style="position:absolute;left:0;top:424px;width:33px;height:1px;background:#000"></div>
<div style="position:absolute;left:33px;top:424px;width:109px;height:1px;background:#d8d8d8"></div>
<div class="t" style="left:0px;top:410px;width:30px;text-align:right;font-size:12px;letter-spacing:-0.6px">67</div>
<div class="t" style="left:35px;top:410px;width:62px;overflow:hidden;font-size:12px;letter-spacing:-0.6px">05123134030000</div>
<div class="t" style="left:99px;top:410px;width:42px;overflow:hidden;font-size:12px;letter-spacing:-0.5px"></div>
<div class="rh" style="left:0px;top:425px;width:32px;height:16px"></div>
<div style="position:absolute;left:0;top:441px;width:33px;height:1px;background:#000"></div>
<div style="position:absolute;left:33px;top:441px;width:109px;height:1px;background:#d8d8d8"></div>
<div class="t" style="left:0px;top:427px;width:30px;text-align:right;font-size:12px;letter-spacing:-0.6px">68</div>
<div class="t" style="left:35px;top:427px;width:62px;overflow:hidden;font-size:12px;letter-spacing:-0.6px">05123134270000</div>
<div class="t" style="left:99px;top:427px;width:42px;overflow:hidden;font-size:12px;letter-spacing:-0.5px"></div>
<div class="rh" style="left:0px;top:442px;width:32px;height:16px"></div>
<div style="position:absolute;left:0;top:458px;width:33px;height:1px;background:#000"></div>
<div style="position:absolute;left:33px;top:458px;width:109px;height:1px;background:#d8d8d8"></div>
<div class="t" style="left:0px;top:444px;width:30px;text-align:right;font-size:12px;letter-spacing:-0.6px">69</div>
<div class="t" style="left:35px;top:444px;width:62px;overflow:hidden;font-size:12px;letter-spacing:-0.6px">05123134280000</div>
<div class="t" style="left:99px;top:444px;width:42px;overflow:hidden;font-size:12px;letter-spacing:-0.5px"></div>
<div class="rh" style="left:0px;top:459px;width:32px;height:16px"></div>
<div style="position:absolute;left:0;top:475px;width:33px;height:1px;background:#000"></div>
<div style="position:absolute;left:33px;top:475px;width:109px;height:1px;background:#d8d8d8"></div>
<div class="t" style="left:0px;top:461px;width:30px;text-align:right;font-size:12px;letter-spacing:-0.6px">70</div>
<div class="t" style="left:35px;top:461px;width:62px;overflow:hidden;font-size:12px;letter-spacing:-0.6px">05123134290000</div>
<div class="t" style="left:99px;top:461px;width:42px;overflow:hidden;font-size:12px;letter-spacing:-0.5px">8-28A</div>
<div class="rh" style="left:0px;top:476px;width:32px;height:16px"></div>
<div style="position:absolute;left:0;top:492px;width:33px;height:1px;background:#000"></div>
<div style="position:absolute;left:33px;top:492px;width:109px;height:1px;background:#d8d8d8"></div>
<div class="t" style="left:0px;top:478px;width:30px;text-align:right;font-size:12px;letter-spacing:-0.6px">71</div>
<div class="t" style="left:35px;top:478px;width:62px;overflow:hidden;font-size:12px;letter-spacing:-0.6px">05123134330000</div>
<div class="t" style="left:99px;top:478px;width:42px;overflow:hidden;font-size:12px;letter-spacing:-0.5px">E</div>
<div class="rh" style="left:0px;top:493px;width:32px;height:16px"></div>
<div style="position:absolute;left:0;top:509px;width:33px;height:1px;background:#000"></div>
<div style="position:absolute;left:33px;top:509px;width:109px;height:1px;background:#d8d8d8"></div>
<div class="t" style="left:0px;top:495px;width:30px;text-align:right;font-size:12px;letter-spacing:-0.6px">72</div>
<div class="t" style="left:35px;top:495px;width:62px;overflow:hidden;font-size:12px;letter-spacing:-0.6px">05123134340000</div>
<div class="t" style="left:99px;top:495px;width:42px;overflow:hidden;font-size:12px;letter-spacing:-0.5px"></div>
<div class="rh" style="left:0px;top:510px;width:32px;height:16px"></div>
<div style="position:absolute;left:0;top:526px;width:33px;height:1px;background:#000"></div>
<div style="position:absolute;left:33px;top:526px;width:109px;height:1px;background:#d8d8d8"></div>
<div class="t" style="left:0px;top:512px;width:30px;text-align:right;font-size:12px;letter-spacing:-0.6px">73</div>
<div class="t" style="left:35px;top:512px;width:62px;overflow:hidden;font-size:12px;letter-spacing:-0.6px">05123134520000</div>
<div class="t" style="left:99px;top:512px;width:42px;overflow:hidden;font-size:12px;letter-spacing:-0.5px">M</div>
<div class="rh" style="left:0px;top:527px;width:32px;height:16px"></div>
<div style="position:absolute;left:0;top:543px;width:33px;height:1px;background:#000"></div>
<div style="position:absolute;left:33px;top:543px;width:109px;height:1px;background:#d8d8d8"></div>
<div class="t" style="left:0px;top:529px;width:30px;text-align:right;font-size:12px;letter-spacing:-0.6px">74</div>
<div class="t" style="left:35px;top:529px;width:62px;overflow:hidden;font-size:12px;letter-spacing:-0.6px">05123134560000</div>
<div class="t" style="left:99px;top:529px;width:42px;overflow:hidden;font-size:12px;letter-spacing:-0.5px">F</div>
<div class="rh" style="left:0px;top:544px;width:32px;height:16px"></div>
<div style="position:absolute;left:0;top:560px;width:33px;height:1px;background:#000"></div>
<div style="position:absolute;left:33px;top:560px;width:109px;height:1px;background:#d8d8d8"></div>
<div class="t" style="left:0px;top:546px;width:30px;text-align:right;font-size:12px;letter-spacing:-0.6px">75</div>
<div class="t" style="left:35px;top:546px;width:62px;overflow:hidden;font-size:12px;letter-spacing:-0.6px">05123134590000</div>
<div class="t" style="left:99px;top:546px;width:42px;overflow:hidden;font-size:12px;letter-spacing:-0.5px">10-21</div>
<div class="rh" style="left:0px;top:561px;width:32px;height:16px"></div>
<div style="position:absolute;left:0;top:577px;width:33px;height:1px;background:#000"></div>
<div style="position:absolute;left:33px;top:577px;width:109px;height:1px;background:#d8d8d8"></div>
<div class="t" style="left:0px;top:563px;width:30px;text-align:right;font-size:12px;letter-spacing:-0.6px">76</div>
<div class="t" style="left:35px;top:563px;width:62px;overflow:hidden;font-size:12px;letter-spacing:-0.6px">05123134610000</div>
<div class="t" style="left:99px;top:563px;width:42px;overflow:hidden;font-size:12px;letter-spacing:-0.5px">10-21</div>
</div>
<div style="position:absolute;left:39px;top:132px;width:1px;height:567px;background:#000"></div>
<div style="position:absolute;left:104px;top:132px;width:1px;height:567px;background:#d0d0d0"></div>
<div style="position:absolute;left:149px;top:115px;width:16px;height:584px;background:linear-gradient(90deg,#eeeef2,#fbfbfd 50%,#ececf0)"></div>
<div style="position:absolute;left:150px;top:116px;width:15px;height:16px;background:linear-gradient(135deg,#f4f6fc,#cdd2e4);border:1px solid #b4b8c8;border-radius:2px"></div>
<svg style="position:absolute;left:150px;top:116px" width="15" height="16" viewBox="0 0 15 16"><path d="M4 10 L7.5 6.5 L11 10" fill="none" stroke="#404050" stroke-width="2"/></svg>
<div style="position:absolute;left:150px;top:295px;width:15px;height:17px;background:linear-gradient(135deg,#f4f6fc,#cdd2e4);border:1px solid #b4b8c8;border-radius:2px"></div>
<svg style="position:absolute;left:150px;top:295px" width="15" height="17" viewBox="0 0 15 17" shape-rendering="crispEdges"><g fill="#a0a4b8"><rect x="4" y="5" width="7" height="1"/><rect x="4" y="7" width="7" height="1"/><rect x="4" y="9" width="7" height="1"/><rect x="4" y="11" width="7" height="1"/></g></svg>
<div style="position:absolute;left:150px;top:681px;width:15px;height:16px;background:linear-gradient(135deg,#f4f6fc,#cdd2e4);border:1px solid #b4b8c8;border-radius:2px"></div>
<svg style="position:absolute;left:150px;top:681px" width="15" height="16" viewBox="0 0 15 16"><path d="M4 6 L7.5 9.5 L11 6" fill="none" stroke="#404050" stroke-width="2"/></svg>
<div style="position:absolute;left:7px;top:699px;width:142px;height:16px;background:linear-gradient(#eeeef2,#fbfbfd 50%,#ececf0)"></div>
<div style="position:absolute;left:8px;top:699px;width:16px;height:16px;background:linear-gradient(135deg,#f4f6fc,#cdd2e4);border:1px solid #b4b8c8;border-radius:2px"></div>
<svg style="position:absolute;left:8px;top:699px" width="16" height="16" viewBox="0 0 16 16"><path d="M9.5 3.5 L6 7.5 L9.5 11.5" fill="none" stroke="#404050" stroke-width="2"/></svg>
<div style="position:absolute;left:25px;top:699px;width:16px;height:16px;background:linear-gradient(135deg,#f4f6fc,#cdd2e4);border:1px solid #b4b8c8;border-radius:2px"></div>
<svg style="position:absolute;left:25px;top:699px" width="16" height="16" viewBox="0 0 16 16" shape-rendering="crispEdges"><g fill="#a0a4b8"><rect x="4" y="4" width="1" height="7"/><rect x="6" y="4" width="1" height="7"/><rect x="8" y="4" width="1" height="7"/><rect x="10" y="4" width="1" height="7"/></g></svg>
<div style="position:absolute;left:132px;top:699px;width:16px;height:16px;background:linear-gradient(135deg,#f4f6fc,#cdd2e4);border:1px solid #b4b8c8;border-radius:2px"></div>
<svg style="position:absolute;left:132px;top:699px" width="16" height="16" viewBox="0 0 16 16"><path d="M6 3.5 L9.5 7.5 L6 11.5" fill="none" stroke="#404050" stroke-width="2"/></svg>
<div style="position:absolute;left:167px;top:113px;width:1px;height:605px;background:#909090"></div>
<div style="position:absolute;left:171px;top:113px;width:1px;height:605px;background:#fff"></div>
<div style="position:absolute;left:174px;top:115px;width:46px;height:19px;background:#AAFFFF"></div>
<div class="t" style="left:174px;top:118px;width:46px;text-align:center;color:#000;">Project</div>
<div style="position:absolute;left:234px;top:115px;width:38px;height:19px;background:#FF0000"></div>
<div class="t" style="left:234px;top:118px;width:38px;text-align:center;color:#600000;">Well</div>
<div style="position:absolute;left:286px;top:115px;width:55px;height:19px;background:#C0FFC0"></div>
<div class="t" style="left:286px;top:118px;width:55px;text-align:center;color:#000;">Location</div>
<div style="position:absolute;left:354px;top:115px;width:55px;height:19px;background:#FFC0FF"></div>
<div class="t" style="left:354px;top:118px;width:55px;text-align:center;color:#000;">FmTops</div>
<div style="position:absolute;left:423px;top:115px;width:43px;height:19px;background:#A0A0FF"></div>
<div class="t" style="left:423px;top:118px;width:43px;text-align:center;color:#000;">Zones</div>
<div style="position:absolute;left:479px;top:115px;width:39px;height:19px;background:#FFFF90"></div>
<div class="t" style="left:479px;top:118px;width:39px;text-align:center;color:#000;">Logs</div>
<div style="position:absolute;left:532px;top:115px;width:52px;height:19px;background:#C07070"></div>
<div class="t" style="left:532px;top:118px;width:52px;text-align:center;color:#000;">IP Tests</div>
<div style="position:absolute;left:599px;top:115px;width:60px;height:19px;background:#C0C080"></div>
<div class="t" style="left:599px;top:118px;width:60px;text-align:center;color:#000;">Fm Tests</div>
<div style="position:absolute;left:673px;top:115px;width:42px;height:19px;background:#C0C0C0"></div>
<div class="t" style="left:673px;top:118px;width:42px;text-align:center;color:#000;">Cores</div>
<div style="position:absolute;left:729px;top:115px;width:78px;height:19px;background:#7070FF"></div>
<div class="t" style="left:729px;top:118px;width:78px;text-align:center;color:#000;">Perfs/Shows</div>
<div style="position:absolute;left:821px;top:115px;width:67px;height:19px;background:#00DD44"></div>
<div class="t" style="left:821px;top:118px;width:67px;text-align:center;color:#000;">Production</div>
<div style="position:absolute;left:902px;top:115px;width:71px;height:19px;background:#60B0B0"></div>
<div class="t" style="left:902px;top:118px;width:71px;text-align:center;color:#000;">Prod Cums</div>
<div style="position:absolute;left:985px;top:113px;width:56px;height:23px;background:#B066FF;border:1px solid #fff;border-top-color:#805aa8;border-left-color:#805aa8"></div>
<div class="t" style="left:985px;top:118px;width:55px;text-align:center;color:#000;font-weight:bold;">Rasters</div>
<div style="position:absolute;left:1053px;top:115px;width:38px;height:19px;background:#A09060"></div>
<div class="t" style="left:1053px;top:118px;width:38px;text-align:center;color:#000;">Other</div>
<div style="position:absolute;left:1105px;top:115px;width:39px;height:19px;background:#FFFF00"></div>
<div class="t" style="left:1105px;top:118px;width:39px;text-align:center;color:#000;">Scout</div>
<div style="position:absolute;left:1158px;top:115px;width:38px;height:19px;background:#0080FF"></div>
<div class="t" style="left:1158px;top:118px;width:38px;text-align:center;color:#000;">View</div>
<div style="position:absolute;left:226px;top:113px;width:1px;height:23px;background:#a0a0a0"></div>
<div style="position:absolute;left:227px;top:113px;width:1px;height:23px;background:#fff"></div>
<div style="position:absolute;left:278px;top:113px;width:1px;height:23px;background:#a0a0a0"></div>
<div style="position:absolute;left:279px;top:113px;width:1px;height:23px;background:#fff"></div>
<div style="position:absolute;left:348px;top:113px;width:1px;height:23px;background:#a0a0a0"></div>
<div style="position:absolute;left:349px;top:113px;width:1px;height:23px;background:#fff"></div>
<div style="position:absolute;left:415px;top:113px;width:1px;height:23px;background:#a0a0a0"></div>
<div style="position:absolute;left:416px;top:113px;width:1px;height:23px;background:#fff"></div>
<div style="position:absolute;left:472px;top:113px;width:1px;height:23px;background:#a0a0a0"></div>
<div style="position:absolute;left:473px;top:113px;width:1px;height:23px;background:#fff"></div>
<div style="position:absolute;left:525px;top:113px;width:1px;height:23px;background:#a0a0a0"></div>
<div style="position:absolute;left:526px;top:113px;width:1px;height:23px;background:#fff"></div>
<div style="position:absolute;left:591px;top:113px;width:1px;height:23px;background:#a0a0a0"></div>
<div style="position:absolute;left:592px;top:113px;width:1px;height:23px;background:#fff"></div>
<div style="position:absolute;left:665px;top:113px;width:1px;height:23px;background:#a0a0a0"></div>
<div style="position:absolute;left:666px;top:113px;width:1px;height:23px;background:#fff"></div>
<div style="position:absolute;left:722px;top:113px;width:1px;height:23px;background:#a0a0a0"></div>
<div style="position:absolute;left:723px;top:113px;width:1px;height:23px;background:#fff"></div>
<div style="position:absolute;left:814px;top:113px;width:1px;height:23px;background:#a0a0a0"></div>
<div style="position:absolute;left:815px;top:113px;width:1px;height:23px;background:#fff"></div>
<div style="position:absolute;left:895px;top:113px;width:1px;height:23px;background:#a0a0a0"></div>
<div style="position:absolute;left:896px;top:113px;width:1px;height:23px;background:#fff"></div>
<div style="position:absolute;left:979px;top:113px;width:1px;height:23px;background:#a0a0a0"></div>
<div style="position:absolute;left:980px;top:113px;width:1px;height:23px;background:#fff"></div>
<div style="position:absolute;left:1045px;top:113px;width:1px;height:23px;background:#a0a0a0"></div>
<div style="position:absolute;left:1046px;top:113px;width:1px;height:23px;background:#fff"></div>
<div style="position:absolute;left:1097px;top:113px;width:1px;height:23px;background:#a0a0a0"></div>
<div style="position:absolute;left:1098px;top:113px;width:1px;height:23px;background:#fff"></div>
<div style="position:absolute;left:1151px;top:113px;width:1px;height:23px;background:#a0a0a0"></div>
<div style="position:absolute;left:1152px;top:113px;width:1px;height:23px;background:#fff"></div>
<div style="position:absolute;left:1203px;top:113px;width:1px;height:23px;background:#a0a0a0"></div>
<div style="position:absolute;left:1204px;top:113px;width:1px;height:23px;background:#fff"></div>
<div style="position:absolute;left:176px;top:143px;width:1071px;height:547px;border-top:1px solid #fff;border-left:1px solid #fff;border-right:1px solid #a0a0a0;border-bottom:1px solid #a0a0a0"></div>
<div style="position:absolute;left:178px;top:151px;width:1068px;height:444px;border:1px solid #fff"></div>
<div style="position:absolute;left:177px;top:150px;width:1068px;height:444px;border:1px solid #a0a0a0"></div>
<div class="t" style="left:183px;top:144px;background:#E0DFE3;padding:0 2px;font-size:12px;letter-spacing:0.13px">Raster Log Calibration Group (Depth Range)&nbsp;&nbsp; Image File</div>
<div style="position:absolute;left:179px;top:161px;width:1065px;height:432px;background:#fff;border-top:2px solid #707070;border-left:2px solid #707070;border-right:1px solid #fff;border-bottom:1px solid #fff"></div>
<div style="position:absolute;left:181px;top:163px;width:1062px;height:17px;background:#E0DFE3"></div>
<div style="position:absolute;left:181px;top:180px;width:1062px;height:1px;background:#707070"></div>
<div style="position:absolute;left:181px;top:163px;width:125px;height:17px;border-top:1px solid #fff;border-left:1px solid #fff;border-right:2px solid #808080"></div>
<div class="t" style="left:181px;top:165px;width:125px;text-align:left;padding-left:6px;">Group</div>
<div style="position:absolute;left:306px;top:163px;width:75px;height:17px;border-top:1px solid #fff;border-left:1px solid #fff;border-right:2px solid #808080"></div>
<div class="t" style="left:306px;top:165px;width:75px;text-align:right;padding-right:5px;">Upper</div>
<div style="position:absolute;left:381px;top:163px;width:75px;height:17px;border-top:1px solid #fff;border-left:1px solid #fff;border-right:2px solid #808080"></div>
<div class="t" style="left:381px;top:165px;width:75px;text-align:right;padding-right:5px;">Lower</div>
<div style="position:absolute;left:456px;top:163px;width:50px;height:17px;border-top:1px solid #fff;border-left:1px solid #fff;border-right:2px solid #808080"></div>
<div class="t" style="left:456px;top:165px;width:50px;text-align:right;padding-right:5px;">Shift</div>
<div style="position:absolute;left:506px;top:163px;width:50px;height:17px;border-top:1px solid #fff;border-left:1px solid #fff;border-right:2px solid #808080"></div>
<div class="t" style="left:506px;top:165px;width:50px;text-align:center;">Units</div>
<div style="position:absolute;left:556px;top:163px;width:50px;height:17px;border-top:1px solid #fff;border-left:1px solid #fff;border-right:2px solid #808080"></div>
<div class="t" style="left:556px;top:165px;width:50px;text-align:center;">Type</div>
<div style="position:absolute;left:606px;top:163px;width:200px;height:17px;border-top:1px solid #fff;border-left:1px solid #fff;border-right:2px solid #808080"></div>
<div class="t" style="left:606px;top:165px;width:200px;text-align:left;padding-left:6px;">Image</div>
<div style="position:absolute;left:806px;top:163px;width:25px;height:17px;border-top:1px solid #fff;border-left:1px solid #fff;border-right:2px solid #808080"></div>
<div class="t" style="left:806px;top:165px;width:25px;text-align:left;padding-left:6px;">P...</div>
<div style="position:absolute;left:181px;top:198px;width:1062px;height:1px;background:#d8d8d8"></div>
<div style="position:absolute;left:181px;top:214px;width:1062px;height:1px;background:#d8d8d8"></div>
<div style="position:absolute;left:181px;top:230px;width:1062px;height:1px;background:#d8d8d8"></div>
<div style="position:absolute;left:181px;top:246px;width:1062px;height:1px;background:#d8d8d8"></div>
<div style="position:absolute;left:181px;top:262px;width:1062px;height:1px;background:#d8d8d8"></div>
<div style="position:absolute;left:181px;top:278px;width:1062px;height:1px;background:#d8d8d8"></div>
<div style="position:absolute;left:181px;top:294px;width:1062px;height:1px;background:#d8d8d8"></div>
<div style="position:absolute;left:181px;top:310px;width:1062px;height:1px;background:#d8d8d8"></div>
<div style="position:absolute;left:181px;top:326px;width:1062px;height:1px;background:#d8d8d8"></div>
<div style="position:absolute;left:181px;top:342px;width:1062px;height:1px;background:#d8d8d8"></div>
<div style="position:absolute;left:181px;top:358px;width:1062px;height:1px;background:#d8d8d8"></div>
<div style="position:absolute;left:181px;top:374px;width:1062px;height:1px;background:#d8d8d8"></div>
<div style="position:absolute;left:181px;top:390px;width:1062px;height:1px;background:#d8d8d8"></div>
<div style="position:absolute;left:181px;top:406px;width:1062px;height:1px;background:#d8d8d8"></div>
<div style="position:absolute;left:181px;top:422px;width:1062px;height:1px;background:#d8d8d8"></div>
<div style="position:absolute;left:181px;top:438px;width:1062px;height:1px;background:#d8d8d8"></div>
<div style="position:absolute;left:181px;top:454px;width:1062px;height:1px;background:#d8d8d8"></div>
<div style="position:absolute;left:181px;top:470px;width:1062px;height:1px;background:#d8d8d8"></div>
<div style="position:absolute;left:181px;top:486px;width:1062px;height:1px;background:#d8d8d8"></div>
<div style="position:absolute;left:181px;top:502px;width:1062px;height:1px;background:#d8d8d8"></div>
<div style="position:absolute;left:181px;top:518px;width:1062px;height:1px;background:#d8d8d8"></div>
<div style="position:absolute;left:181px;top:534px;width:1062px;height:1px;background:#d8d8d8"></div>
<div style="position:absolute;left:181px;top:550px;width:1062px;height:1px;background:#d8d8d8"></div>
<div style="position:absolute;left:181px;top:566px;width:1062px;height:1px;background:#d8d8d8"></div>
<div style="position:absolute;left:181px;top:582px;width:1062px;height:1px;background:#d8d8d8"></div>
<div style="position:absolute;left:306px;top:181px;width:1px;height:410px;background:#d8d8d8"></div>
<div style="position:absolute;left:381px;top:181px;width:1px;height:410px;background:#d8d8d8"></div>
<div style="position:absolute;left:456px;top:181px;width:1px;height:410px;background:#d8d8d8"></div>
<div style="position:absolute;left:506px;top:181px;width:1px;height:410px;background:#d8d8d8"></div>
<div style="position:absolute;left:556px;top:181px;width:1px;height:410px;background:#d8d8d8"></div>
<div style="position:absolute;left:606px;top:181px;width:1px;height:410px;background:#d8d8d8"></div>
<div style="position:absolute;left:806px;top:181px;width:1px;height:410px;background:#d8d8d8"></div>
<div style="position:absolute;left:831px;top:181px;width:1px;height:410px;background:#d8d8d8"></div>
<div class="t" style="left:181px;top:184px;width:125px;text-align:left;padding-left:4px;letter-spacing:0.3px">Computed</div>
<div class="t" style="left:306px;top:184px;width:75px;text-align:right;padding-right:6px;letter-spacing:0.3px">6200.0</div>
<div class="t" style="left:381px;top:184px;width:75px;text-align:right;padding-right:6px;letter-spacing:0.3px">6410.0</div>
<div class="t" style="left:456px;top:184px;width:50px;text-align:right;padding-right:6px;letter-spacing:0.3px">0.0</div>
<div class="t" style="left:506px;top:184px;width:50px;text-align:center;letter-spacing:0.3px">FT</div>
<div class="t" style="left:556px;top:184px;width:50px;text-align:center;letter-spacing:0.3px">MD</div>
<div class="t" style="left:606px;top:184px;width:200px;text-align:left;padding-left:6px;letter-spacing:0.3px">05123132590000_Computed.tif</div>
<div class="t" style="left:806px;top:184px;width:25px;text-align:center;letter-spacing:0.3px"></div>
<div class="t" style="left:181px;top:200px;width:125px;text-align:left;padding-left:4px;letter-spacing:0.3px">Density/Neutron</div>
<div class="t" style="left:306px;top:200px;width:75px;text-align:right;padding-right:6px;letter-spacing:0.3px">5700.0</div>
<div class="t" style="left:381px;top:200px;width:75px;text-align:right;padding-right:6px;letter-spacing:0.3px">6900.0</div>
<div class="t" style="left:456px;top:200px;width:50px;text-align:right;padding-right:6px;letter-spacing:0.3px">0.0</div>
<div class="t" style="left:506px;top:200px;width:50px;text-align:center;letter-spacing:0.3px">FT</div>
<div class="t" style="left:556px;top:200px;width:50px;text-align:center;letter-spacing:0.3px">MD</div>
<div class="t" style="left:606px;top:200px;width:200px;text-align:left;padding-left:6px;letter-spacing:0.3px">05123132590000_Density_Neut...</div>
<div class="t" style="left:806px;top:200px;width:25px;text-align:center;letter-spacing:0.3px">Y</div>
<div class="t" style="left:181px;top:216px;width:125px;text-align:left;padding-left:4px;letter-spacing:0.3px">GR_2IN</div>
<div class="t" style="left:306px;top:216px;width:75px;text-align:right;padding-right:6px;letter-spacing:0.3px">100.0</div>
<div class="t" style="left:381px;top:216px;width:75px;text-align:right;padding-right:6px;letter-spacing:0.3px">6400.0</div>
<div class="t" style="left:456px;top:216px;width:50px;text-align:right;padding-right:6px;letter-spacing:0.3px">0.0</div>
<div class="t" style="left:506px;top:216px;width:50px;text-align:center;letter-spacing:0.3px">FT</div>
<div class="t" style="left:556px;top:216px;width:50px;text-align:center;letter-spacing:0.3px">MD</div>
<div class="t" style="left:606px;top:216px;width:200px;text-align:left;padding-left:6px;letter-spacing:0.3px">05123132590000_Resistivity.tif</div>
<div class="t" style="left:806px;top:216px;width:25px;text-align:center;letter-spacing:0.3px">Y</div>
<div class="t" style="left:181px;top:232px;width:125px;text-align:left;padding-left:4px;letter-spacing:0.3px">MICROLOG</div>
<div class="t" style="left:306px;top:232px;width:75px;text-align:right;padding-right:6px;letter-spacing:0.3px">5700.0</div>
<div class="t" style="left:381px;top:232px;width:75px;text-align:right;padding-right:6px;letter-spacing:0.3px">6400.0</div>
<div class="t" style="left:456px;top:232px;width:50px;text-align:right;padding-right:6px;letter-spacing:0.3px">0.0</div>
<div class="t" style="left:506px;top:232px;width:50px;text-align:center;letter-spacing:0.3px">FT</div>
<div class="t" style="left:556px;top:232px;width:50px;text-align:center;letter-spacing:0.3px">MD</div>
<div class="t" style="left:606px;top:232px;width:200px;text-align:left;padding-left:6px;letter-spacing:0.3px">05123132590000_MicroLog.tif</div>
<div class="t" style="left:806px;top:232px;width:25px;text-align:center;letter-spacing:0.3px">Y</div>
<div class="t" style="left:181px;top:248px;width:125px;text-align:left;padding-left:4px;letter-spacing:0.3px">Resistivity</div>
<div class="t" style="left:306px;top:248px;width:75px;text-align:right;padding-right:6px;letter-spacing:0.3px">5400.0</div>
<div class="t" style="left:381px;top:248px;width:75px;text-align:right;padding-right:6px;letter-spacing:0.3px">6400.0</div>
<div class="t" style="left:456px;top:248px;width:50px;text-align:right;padding-right:6px;letter-spacing:0.3px">0.0</div>
<div class="t" style="left:506px;top:248px;width:50px;text-align:center;letter-spacing:0.3px">FT</div>
<div class="t" style="left:556px;top:248px;width:50px;text-align:center;letter-spacing:0.3px">MD</div>
<div class="t" style="left:606px;top:248px;width:200px;text-align:left;padding-left:6px;letter-spacing:0.3px">05123132590000_Resistivity.tif</div>
<div class="t" style="left:806px;top:248px;width:25px;text-align:center;letter-spacing:0.3px">Y</div>
<div class="t" style="left:181px;top:264px;width:125px;text-align:left;padding-left:4px;letter-spacing:0.3px">Resistivity_2in</div>
<div class="t" style="left:306px;top:264px;width:75px;text-align:right;padding-right:6px;letter-spacing:0.3px">100.0</div>
<div class="t" style="left:381px;top:264px;width:75px;text-align:right;padding-right:6px;letter-spacing:0.3px">6400.0</div>
<div class="t" style="left:456px;top:264px;width:50px;text-align:right;padding-right:6px;letter-spacing:0.3px">0.0</div>
<div class="t" style="left:506px;top:264px;width:50px;text-align:center;letter-spacing:0.3px">FT</div>
<div class="t" style="left:556px;top:264px;width:50px;text-align:center;letter-spacing:0.3px">MD</div>
<div class="t" style="left:606px;top:264px;width:200px;text-align:left;padding-left:6px;letter-spacing:0.3px">05123132590000_Resistivity.tif</div>
<div class="t" style="left:806px;top:264px;width:25px;text-align:center;letter-spacing:0.3px">Y</div>
<div style="position:absolute;left:181px;top:246px;width:651px;height:17px;border:2px solid #CC0000"></div>
<div style="position:absolute;left:176px;top:595px;width:1071px;height:1px;background:#a0a0a0"></div>
<div style="position:absolute;left:177px;top:596px;width:1069px;height:1px;background:#fff"></div>
<div style="position:absolute;left:194px;top:602px;width:13px;height:13px;background:#fff;border-top:1px solid #808080;border-left:1px solid #808080;border-right:1px solid #fff;border-bottom:1px solid #fff;box-shadow:inset 1px 1px 0 #909090"></div>
<svg style="position:absolute;left:196px;top:604px" width="9" height="9" shape-rendering="crispEdges"><g fill="#000"><rect x="1" y="3" width="1" height="3"/><rect x="2" y="4" width="1" height="3"/><rect x="3" y="5" width="1" height="3"/><rect x="4" y="4" width="1" height="3"/><rect x="5" y="3" width="1" height="3"/><rect x="6" y="2" width="1" height="3"/><rect x="7" y="1" width="1" height="3"/></g></svg>
<div class="t" style="left:212px;top:601px;">Show Depth Range</div>
<div class="btn" style="left:192px;top:627px;width:169px;height:25px;"></div>
<div class="t" style="left:238px;top:633px;color:#000;">Assign/Calibrate...</div>
<div class="btn" style="left:192px;top:655px;width:169px;height:25px;"></div>
<div class="t" style="left:245px;top:661px;color:#000;">Correlate Tops...</div>
<div class="btn" style="left:368px;top:600px;width:169px;height:25px;"></div>
<div class="t" style="left:431px;top:606px;color:#000;">Image Info...</div>
<div class="btn" style="left:368px;top:627px;width:169px;height:25px;"></div>
<div class="t" style="left:407px;top:633px;color:#000;">Group Maintenance...</div>
<div class="btn" style="left:368px;top:655px;width:169px;height:25px;"></div>
<div class="t" style="left:427px;top:661px;color:#000;">Disassociate</div>
<div class="btn" style="left:544px;top:599px;width:153px;height:25px;"></div>
<div class="t" style="left:589px;top:605px;color:#000;">Pay Data... !</div>
<div class="btn" style="left:544px;top:626px;width:153px;height:25px;"></div>
<div class="t" style="left:567px;top:632px;color:#000;">Neuralog Scanner...</div>
<div class="btn" style="left:544px;top:654px;width:153px;height:25px;"></div>
<div class="t" style="left:587px;top:660px;color:#A8A8A8;text-shadow:1px 1px 0 #fff;">Merge Groups....</div>
<svg style="position:absolute;left:217px;top:632px" width="16" height="15" viewBox="0 0 16 15" shape-rendering="crispEdges"><rect x="0" y="0" width="16" height="15" fill="#000"/><rect x="1" y="1" width="14" height="13" fill="#fff"/><g fill="#000"><rect x="4" y="1" width="1" height="13"/><rect x="8" y="1" width="1" height="13"/><rect x="12" y="1" width="1" height="13"/><rect x="1" y="4" width="14" height="1"/><rect x="1" y="7" width="14" height="1"/><rect x="1" y="10" width="14" height="1"/></g><g fill="#e00000"><rect x="1" y="2" width="14" height="1"/><rect x="1" y="8" width="14" height="1"/><rect x="1" y="12" width="14" height="1"/></g></svg><svg style="position:absolute;left:220px;top:659px" width="19" height="18" viewBox="0 0 19 18"><path d="M9.5 2.5 V18" stroke="#800000" stroke-width="2.8"/><path d="M1.8 7.8 Q5 3.5 9.5 1.8 Q14 3.5 17.2 7.8" fill="none" stroke="#000" stroke-width="2"/></svg><svg style="position:absolute;left:410px;top:603px" width="14" height="20" viewBox="0 0 14 20"><circle cx="8.3" cy="3.6" r="1.7" fill="#fff" stroke="#000" stroke-width="1.1"/><path d="M4 8 H9 L7.6 13 Q8.8 13.5 9.2 14.5 L8.2 17.5 H3 L4.5 12.5 Q3.5 12 3.4 11 Z" fill="#fff" stroke="#000" stroke-width="1.2" stroke-linejoin="round"/><path d="M5 16 L7.5 9.5" stroke="#000" stroke-width="0.7"/></svg><svg style="position:absolute;left:384px;top:630px" width="19" height="19" viewBox="0 0 19 19"><path d="M3 2 V7 Q3 10 7 11 V18 H11 V11 Q15 10 15 7 V2 L12.5 4 V7 H6 V4 Z" fill="#80b0ff" transform="translate(1.5,1)"/><path d="M3 2 V7 Q3 10 7 11 V18 H11 V11 Q15 10 15 7 V2 L12.5 4 V7 H6 V4 Z" fill="#0020e0" stroke="#000080" stroke-width="0.6"/><rect x="8" y="13" width="2" height="3" fill="#40e0ff"/></svg><svg style="position:absolute;left:407px;top:660px" width="15" height="15" viewBox="0 0 15 15"><path d="M2 1.5 L13 13.5 M13 1.5 L2 13.5" stroke="#000" stroke-width="1.9"/></svg><svg style="position:absolute;left:566px;top:659px" width="16" height="15" viewBox="0 0 16 15" shape-rendering="crispEdges"><g fill="#a8a8a8"><rect x="0" y="0" width="2" height="15"/><rect x="0" y="1" width="16" height="1"/><rect x="0" y="6" width="16" height="2"/><rect x="0" y="13" width="16" height="1"/><rect x="3" y="3" width="10" height="1"/><rect x="3" y="10" width="10" height="1"/></g><g fill="#fff"><rect x="2" y="2" width="14" height="1"/><rect x="2" y="14" width="14" height="1"/></g></svg>
<div style="position:absolute;left:176px;top:689px;width:1071px;height:1px;background:#a0a0a0"></div>
<div style="position:absolute;left:172px;top:694px;width:1078px;height:23px;border-top:2px solid #909090;border-left:1px solid #909090;border-bottom:2px solid #fff;border-right:1px solid #fff"></div>
<div class="t" style="left:176px;top:696px;font-size:11px;letter-spacing:-0.1px">View As</div>
<div style="position:absolute;left:229px;top:699px;width:12px;height:12px;border-radius:50%;background:radial-gradient(circle at 60% 60%,#fff,#f0f0f0 50%,#d0d0d0);border:1px solid #b0b0b0"></div>
<div style="position:absolute;left:233px;top:703px;width:4px;height:4px;border-radius:50%;background:#000"></div>
<div class="t" style="left:247px;top:698px;font-size:11px;letter-spacing:-0.3px">Imperial</div>
<div style="position:absolute;left:305px;top:699px;width:12px;height:12px;border-radius:50%;background:radial-gradient(circle at 60% 60%,#fff,#f0f0f0 50%,#d0d0d0);border:1px solid #b0b0b0"></div>
<div class="t" style="left:323px;top:698px;font-size:11px;letter-spacing:-0.3px">Metric</div>
<div style="position:absolute;left:373px;top:699px;width:12px;height:12px;border-radius:50%;background:radial-gradient(circle at 60% 60%,#fff,#f0f0f0 50%,#d0d0d0);border:1px solid #b0b0b0"></div>
<div class="t" style="left:391px;top:698px;font-size:11px;letter-spacing:-0.3px">Raw</div>
<div class="t" style="left:447px;top:698px;font-size:11px;letter-spacing:-0.35px">System Units = Imperial</div>
<div class="t" style="left:1062px;top:698px;font-size:11px;letter-spacing:-0.12px;color:#009880">Version 3.1.9.7&nbsp;&nbsp;(Mar 28, 2008&nbsp;&nbsp;11:13a)</div>
</body></html>
